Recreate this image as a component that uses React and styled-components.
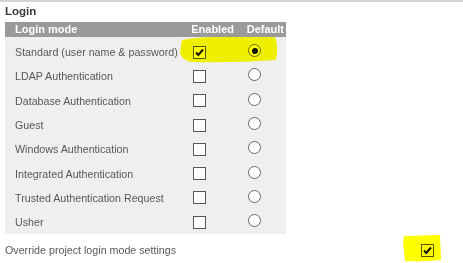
import React from 'react'
import styled, { createGlobalStyle } from 'styled-components'

const GlobalStyle = createGlobalStyle`
  body {
    margin: 0;
    background: #fff;
    font-family: Tahoma, "Liberation Sans", Arial, sans-serif;
    font-size: 10.7px;
    color: #585858;
  }
`;

const Page = styled.div`
  position: relative;
  width: 463px;
  height: 263px;
  border-top: 2px solid #d2d2d2;
  box-sizing: border-box;
  overflow: hidden;
`;

const Title = styled.div`
  padding: 0 5px;
  height: 20px;
  line-height: 19px;
  font-weight: bold;
  font-size: 11.5px;
  color: #3a3a3a;
`;

const Table = styled.div`
  margin-left: 5px;
  width: 281px;
  background: #efefef;
`;

const Grid = styled.div`
  display: grid;
  grid-template-columns: 178px 53px 50px;
  align-items: center;
`;

const HeadRow = styled(Grid)`
  height: 15px;
  background: #9a9a9a;
  color: #fff;
  font-weight: bold;
  font-size: 11px;
  line-height: 15px;
`;

const HeadCell = styled.div`
  padding-left: ${p => (p.$first ? '10px' : '0')};
  padding-right: ${p => (p.$first ? '0' : '2px')};
  text-align: ${p => (p.$first ? 'left' : 'right')};
  white-space: nowrap;
`;

const Body = styled.div`
  padding-top: 3px;
`;

const Row = styled(Grid)`
  height: 24.3px;
`;

const Label = styled.div`
  padding-left: 10px;
  white-space: nowrap;
`;

const Cell = styled.div`
  display: flex;
  padding-left: ${p => p.$pad}px;
`;

const Box = styled.span`
  position: relative;
  display: inline-block;
  width: 13px;
  height: 13px;
  box-sizing: border-box;
  border: 1px solid #555;
  background: #fff;
  svg {
    position: absolute;
    left: 0;
    top: 0;
  }
`;

const Round = styled.span`
  display: inline-flex;
  align-items: center;
  justify-content: center;
  width: 13px;
  height: 13px;
  box-sizing: border-box;
  border: 1px solid #666;
  border-radius: 50%;
  background: #fff;
  margin-top: -3px;
`;

const Dot = styled.span`
  width: 6px;
  height: 6px;
  border-radius: 50%;
  background: #111;
`;

const Footer = styled.div`
  display: flex;
  align-items: center;
  justify-content: space-between;
  height: 30px;
  padding: 1px 29px 0 5px;
`;

const Marker = styled.svg`
  position: absolute;
  left: 0;
  top: -2px;
  pointer-events: none;
  mix-blend-mode: multiply;
`;

const Checkbox = ({ checked }) => (
  <Box>
    {checked && (
      <svg width="11" height="11" viewBox="0 0 11 11">
        <path d="M2 5.5 L4.3 8 L9 2.5" fill="none" stroke="#111" strokeWidth="2" />
      </svg>
    )}
  </Box>
);

const Radio = ({ checked }) => <Round>{checked && <Dot />}</Round>;

const modes = [
  'Standard (user name & password)',
  'LDAP Authentication',
  'Database Authentication',
  'Guest',
  'Windows Authentication',
  'Integrated Authentication',
  'Trusted Authentication Request',
  'Usher',
];

const App = () => {
  return (
    <Page>
      <GlobalStyle />
      <Title>Login</Title>
      <Table>
        <HeadRow>
          <HeadCell $first>Login mode</HeadCell>
          <HeadCell>Enabled</HeadCell>
          <HeadCell>Default</HeadCell>
        </HeadRow>
        <Body>
          {modes.map((m, i) => (
            <Row key={m}>
              <Label>{m}</Label>
              <Cell $pad={10}><Checkbox checked={i === 0} /></Cell>
              <Cell $pad={12}><Radio checked={i === 0} /></Cell>
            </Row>
          ))}
        </Body>
      </Table>
      <Footer>
        <span>Override project login mode settings</span>
        <Checkbox checked />
      </Footer>
      <Marker width="463" height="263" viewBox="0 0 463 263">
        <path
          d="M182 40 Q 205 36 245 37 L 275 37 Q 279 48 276 60 Q 235 63 192 62 Q 181 60 180 52 Z"
          fill="#ffff00"
        />
        <path d="M404 236 L 440 235 L 441 260 Q 422 262 405 261 L 403 241 Z" fill="#ffff00" />
      </Marker>
    </Page>
  )
}

export default App
